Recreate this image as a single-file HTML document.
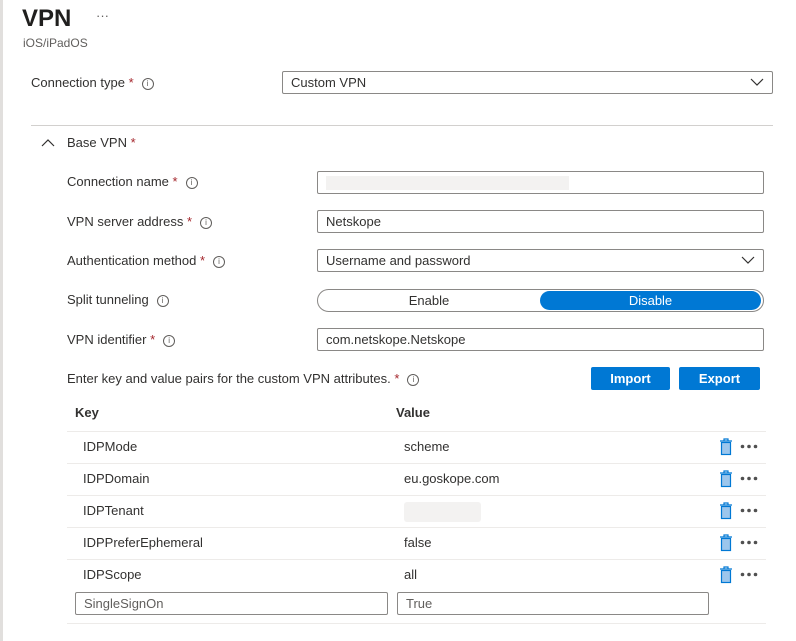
<!DOCTYPE html>
<html><head><style>
body{margin:0;width:796px;height:641px;background:#fff;font-family:"Segoe UI","Liberation Sans",sans-serif;font-size:13px;color:#323130;position:relative;overflow:hidden}
.a{position:absolute}
.lbl{position:absolute;white-space:nowrap}
.req{color:#a4262c}
.i{display:inline-block;width:10px;height:10px;border:1px solid #605e5c;border-radius:50%;font-size:8px;line-height:10px;text-align:center;color:#605e5c;vertical-align:1px;margin-left:8px}
.inp{position:absolute;border:1px solid #8a8886;border-radius:2px;height:21px;line-height:21px;padding-left:8px;box-sizing:content-box}
.chev{position:absolute;right:8px;top:4px}
.btn{position:absolute;background:#0078d4;color:#fff;font-weight:bold;text-align:center;border-radius:2px;height:23px;line-height:23px}
.row{position:absolute;left:67px;width:699px;border-top:1px solid #edebe9}
.tr{position:absolute;left:719px}
.dots{position:absolute;left:740px}
</style></head><body>
<div class="a" style="left:0;top:0;width:3px;height:641px;background:#e1dfdd"></div>
<div class="lbl" style="left:22px;top:5px;font-size:24px;font-weight:bold;color:#201f1e">VPN</div>
<div class="lbl" style="left:96px;top:8px;color:#605e5c">···</div>
<div class="lbl" style="left:23px;top:36px;font-size:12px;color:#605e5c">iOS/iPadOS</div>
<div class="lbl" style="left:31px;top:75px">Connection type <span class="req">*</span><span class="i">i</span></div>
<div class="inp" style="left:282px;top:71px;width:481px">Custom VPN<svg class="chev" width="14" height="12"><path d="M1 3l6 6 6-6" fill="none" stroke="#323130" stroke-width="1.2"/></svg></div>
<div class="a" style="left:31px;top:125px;width:742px;height:1px;background:#d2d0ce"></div>
<svg class="a" style="left:41px;top:137px" width="16" height="12"><path d="M1 9l6-6 6 6" fill="none" stroke="#323130" stroke-width="1.2"/></svg>
<div class="lbl" style="left:67px;top:135px">Base VPN <span class="req">*</span></div>
<div class="lbl" style="left:67px;top:174px">Connection name <span class="req">*</span><span class="i">i</span></div>
<div class="inp" style="left:317px;top:171px;width:437px"><div class="a" style="left:8px;top:4px;width:243px;height:14px;background:#f3f2f1"></div></div>
<div class="lbl" style="left:67px;top:214px">VPN server address <span class="req">*</span><span class="i">i</span></div>
<div class="inp" style="left:317px;top:210px;width:437px">Netskope</div>
<div class="lbl" style="left:67px;top:253px">Authentication method <span class="req">*</span><span class="i">i</span></div>
<div class="inp" style="left:317px;top:249px;width:437px">Username and password<svg class="chev" width="14" height="12"><path d="M1 3l6 6 6-6" fill="none" stroke="#323130" stroke-width="1.2"/></svg></div>
<div class="lbl" style="left:67px;top:292px">Split tunneling<span class="i">i</span></div>
<div class="a" style="left:317px;top:289px;width:445px;height:21px;border:1px solid #8a8886;border-radius:12px">
<div class="a" style="left:0;top:0;width:222px;text-align:center;line-height:21px">Enable</div>
<div class="a" style="left:222px;top:1px;width:221px;height:19px;background:#0078d4;color:#fff;border-radius:10px;text-align:center;line-height:19px">Disable</div></div>
<div class="lbl" style="left:67px;top:332px">VPN identifier <span class="req">*</span><span class="i">i</span></div>
<div class="inp" style="left:317px;top:328px;width:437px">com.netskope.Netskope</div>
<div class="lbl" style="left:67px;top:371px">Enter key and value pairs for the custom VPN attributes. <span class="req">*</span><span class="i">i</span></div>
<div class="btn" style="left:591px;top:367px;width:79px">Import</div>
<div class="btn" style="left:679px;top:367px;width:81px">Export</div>
<div class="lbl" style="left:75px;top:405px;font-weight:bold">Key</div>
<div class="lbl" style="left:396px;top:405px;font-weight:bold">Value</div>
<div class="row" style="top:431px"></div><div class="row" style="top:463px"></div><div class="row" style="top:495px"></div><div class="row" style="top:527px"></div><div class="row" style="top:559px"></div><div class="row" style="top:623px"></div>
<div class="lbl" style="left:83px;top:439px">IDPMode</div><div class="lbl" style="left:404px;top:439px">scheme</div>
<div class="lbl" style="left:83px;top:471px">IDPDomain</div><div class="lbl" style="left:404px;top:471px">eu.goskope.com</div>
<div class="lbl" style="left:83px;top:503px">IDPTenant</div><div class="a" style="left:404px;top:502px;width:77px;height:20px;background:#f3f2f1;border-radius:3px"></div>
<div class="lbl" style="left:83px;top:535px">IDPPreferEphemeral</div><div class="lbl" style="left:404px;top:535px">false</div>
<div class="lbl" style="left:83px;top:567px">IDPScope</div><div class="lbl" style="left:404px;top:567px">all</div>
<svg width="0" height="0" style="position:absolute"><defs><g id="t"><path d="M1 3h12M5 3V1h4v2" fill="none" stroke="#0078d4" stroke-width="1.2"/><rect x="2.5" y="4.5" width="9" height="12" fill="#9cc6ec" stroke="#0078d4" stroke-width="1.2"/></g><g id="d" fill="#505050"><circle cx="2.5" cy="2.5" r="1.8"/><circle cx="9" cy="2.5" r="1.8"/><circle cx="15.5" cy="2.5" r="1.8"/></g></defs></svg>
<svg class="tr" style="top:438px" width="14" height="18"><use href="#t"/></svg>
<svg class="tr" style="top:470px" width="14" height="18"><use href="#t"/></svg>
<svg class="tr" style="top:502px" width="14" height="18"><use href="#t"/></svg>
<svg class="tr" style="top:534px" width="14" height="18"><use href="#t"/></svg>
<svg class="tr" style="top:566px" width="14" height="18"><use href="#t"/></svg>
<svg class="dots" style="top:444px" width="18" height="5"><use href="#d"/></svg>
<svg class="dots" style="top:476px" width="18" height="5"><use href="#d"/></svg>
<svg class="dots" style="top:508px" width="18" height="5"><use href="#d"/></svg>
<svg class="dots" style="top:540px" width="18" height="5"><use href="#d"/></svg>
<svg class="dots" style="top:572px" width="18" height="5"><use href="#d"/></svg>
<div class="inp" style="left:75px;top:592px;width:303px;color:#605e5c">SingleSignOn</div>
<div class="inp" style="left:397px;top:592px;width:302px;color:#605e5c">True</div>
</body></html>
